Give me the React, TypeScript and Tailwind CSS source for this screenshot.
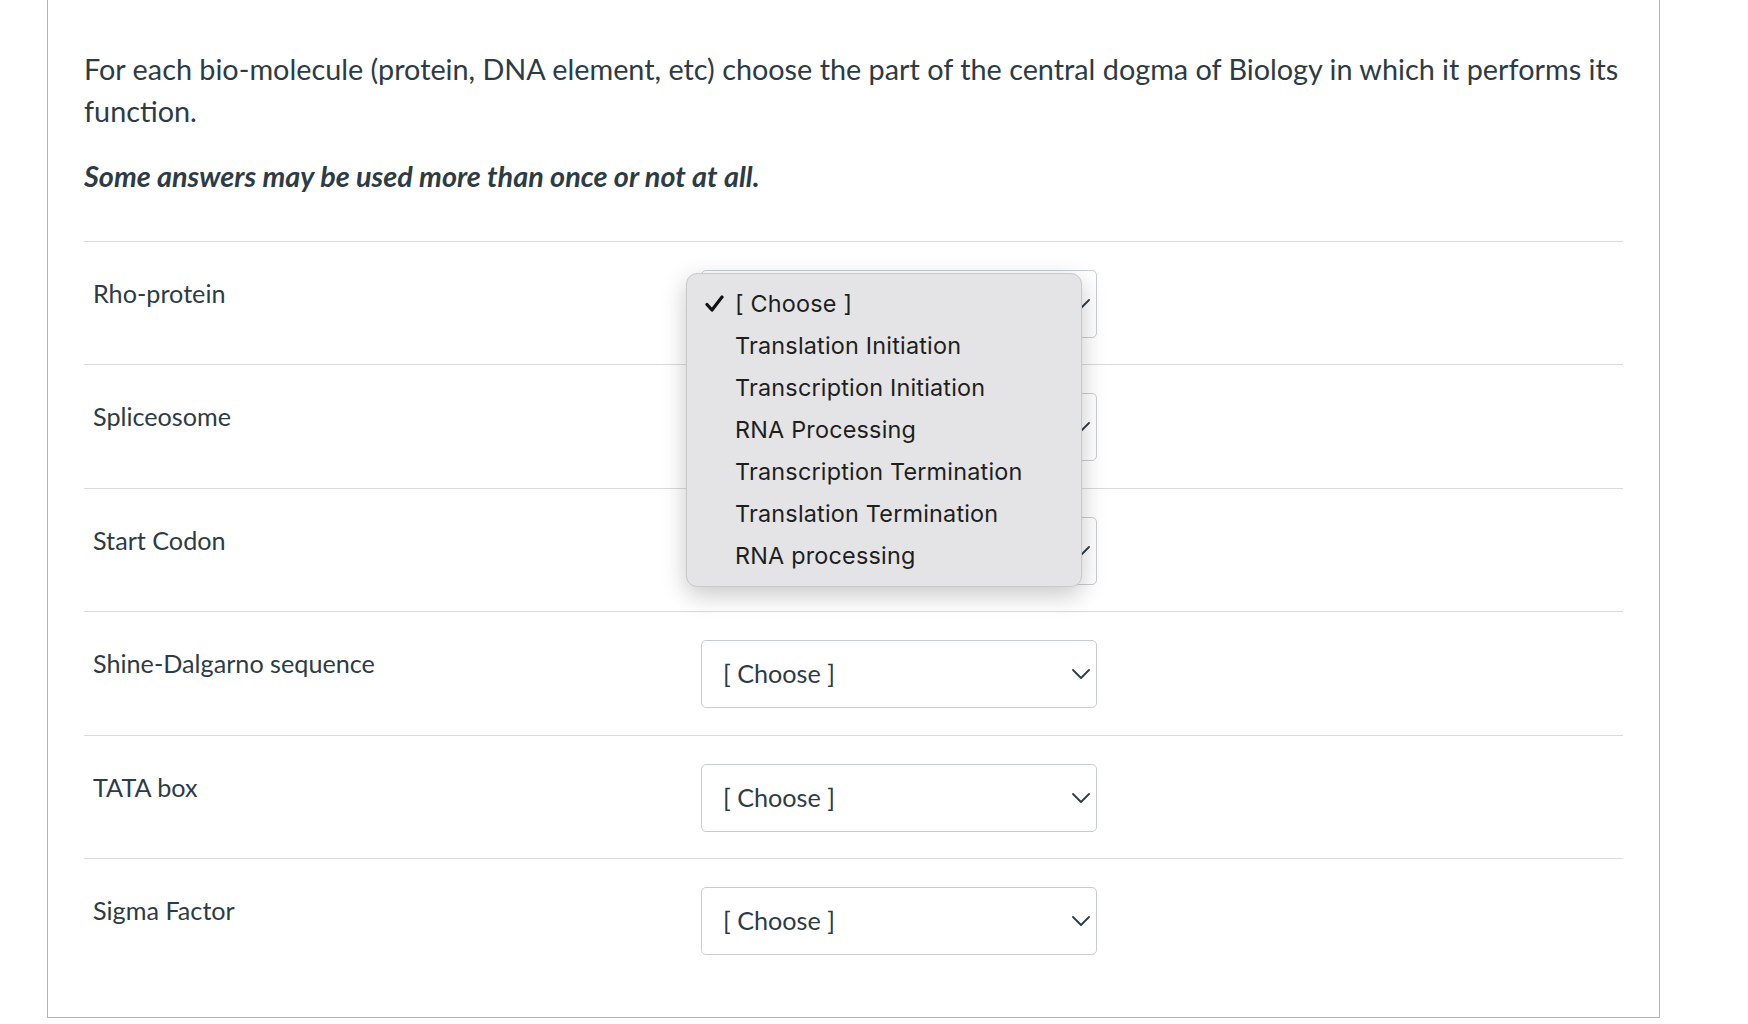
import React from 'react';

const items = [
  'Rho-protein',
  'Spliceosome',
  'Start Codon',
  'Shine-Dalgarno sequence',
  'TATA box',
  'Sigma Factor',
];

const options = [
  '[ Choose ]',
  'Translation Initiation',
  'Transcription Initiation',
  'RNA Processing',
  'Transcription Termination',
  'Translation Termination',
  'RNA processing',
];

const Chevron: React.FC = () => (
  <svg width="18" height="10" viewBox="0 0 18 10" fill="none">
    <polyline points="1,1 9,9 17,1" stroke="#2d3b45" strokeWidth="1.8" strokeLinecap="round" strokeLinejoin="round" />
  </svg>
);

const Popup: React.FC = () => (
  <div className="absolute left-[-15px] top-[3px] z-10 w-[396px] rounded-[11px] border border-[#c9c9cb] bg-[#e4e4e6] py-[9px] shadow-[0_8px_24px_rgba(0,0,0,0.22)] font-['Inter','Noto_Sans',sans-serif] text-[23.4px] tracking-[0.2px] text-[#1e1e1e]">
    {options.map((opt, i) => (
      <div key={opt} className="relative flex h-[42px] items-center pl-[48px]">
        {i === 0 && (
          <svg className="absolute left-[18px] top-[12px]" width="19" height="17" viewBox="0 0 19 17" fill="none">
            <path d="M2 9.5 L7 15 L17 2" stroke="#111" strokeWidth="3.2" strokeLinecap="round" strokeLinejoin="round" />
          </svg>
        )}
        <span>{opt}</span>
      </div>
    ))}
  </div>
);

const Select: React.FC<{ open?: boolean }> = ({ open }) => (
  <div className="relative">
    <div className="flex h-[68px] w-[396px] items-center justify-between rounded-[5px] border border-[#c7cdd1] bg-white pl-[21px] pr-[6px] text-[25.2px] text-[#2d3b45]">
      <span>[ Choose ]</span>
      <Chevron />
    </div>
    {open && <Popup />}
  </div>
);

export default function App() {
  return (
    <div className="h-[1024px] w-[1748px] bg-white font-['Lato','Liberation_Sans',sans-serif] text-[#2d3b45]">
      <div className="ml-[47px] h-[1018px] w-[1613px] border-x border-b border-[#b3b3b3] px-[36px] pt-[48px]">
        <p className="text-[28.8px] leading-[42px]">
          For each bio-molecule (protein, DNA element, etc) choose the part of the central dogma of Biology in which it performs its function.
        </p>
        <p className="mt-[23px] text-[28.8px] font-bold italic leading-[42px]">
          Some answers may be used more than once or not at all.
        </p>
        <div className="mt-[44px]">
          {items.map((label, i) => (
            <div key={label} className="flex h-[123.4px] border-t border-[#dadada]">
              <div className="w-[617px] pl-[9px] pt-[33px] text-[25.2px] leading-[36px]">{label}</div>
              <div className="pt-[28px]">
                <Select open={i === 0} />
              </div>
            </div>
          ))}
        </div>
      </div>
    </div>
  );
}
